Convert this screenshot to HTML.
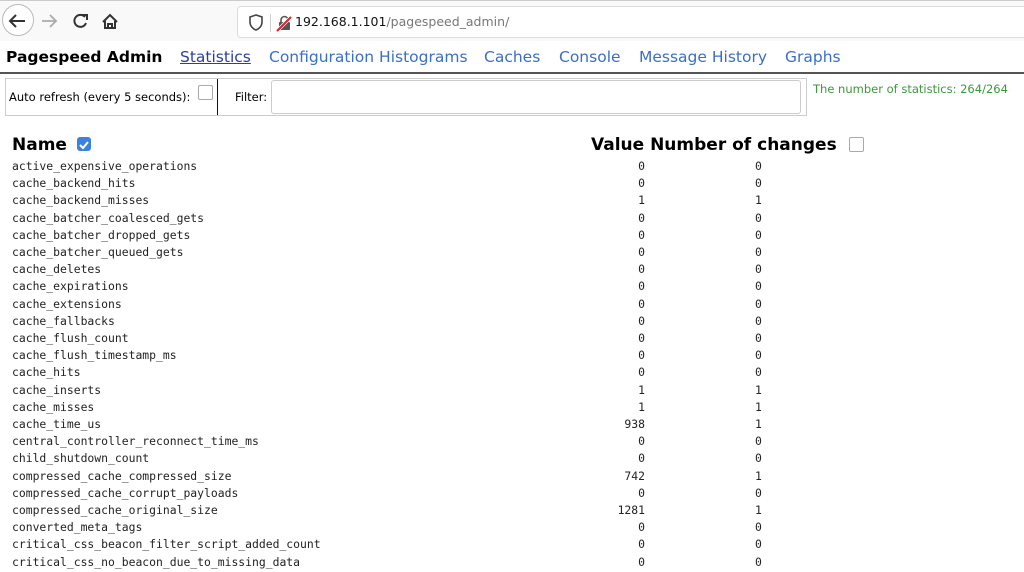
<!DOCTYPE html>
<html><head><meta charset="utf-8"><style>
body{margin:0;width:1024px;height:564px;overflow:hidden;background:#fff;font-family:"DejaVu Sans","Liberation Sans",sans-serif;position:relative}
.chrome{position:absolute;left:0;top:0;width:1024px;height:40px;background:#f9f9fa;border-top:1px solid #ccc}
.url{position:absolute;left:237px;top:5px;width:800px;height:30px;background:#fff;border:1px solid #ddd;border-radius:4px;font-size:12.5px;line-height:30px}
.nav{position:absolute;left:0;top:44px;width:1024px;height:28px;border-bottom:2px solid #555;font-size:15.5px}
.nav span{position:absolute;top:4px}
.nav a{color:#3a6fc7;text-decoration:none}
.bar{position:absolute;left:5px;top:78px;width:800px;height:36px;border:1px solid #ccc;font-size:11.5px}
.t{position:absolute;font-family:"DejaVu Sans Mono","Liberation Mono",monospace;font-size:11.4px;color:#222}
.row{position:absolute;left:12px;height:17px;width:760px}
.row .n{position:absolute;left:0}
.row .v{position:absolute;right:127px;text-align:right}
.row .c{position:absolute;left:743px}
</style></head><body>
<div class="chrome">
 <div style="position:absolute;left:2px;top:3px;width:30px;height:30px;border:1px solid #bbb;border-radius:50%;background:#fff"></div>
 <svg style="position:absolute;left:0;top:0" width="240" height="40">
  <path d="M25 20H10M16 14l-6 6 6 6" stroke="#333" stroke-width="2" fill="none"/>
  <path d="M42 20h14M50 14l6 6-6 6" stroke="#aaa" stroke-width="1.8" fill="none"/>
  <path d="M85 16a6 6 0 1 0 1 6" stroke="#333" stroke-width="2" fill="none"/><path d="M82 14h5v5" stroke="#333" stroke-width="2" fill="none"/>
  <path d="M103 21l7-7 7 7M105 20v7h10v-7M108 27v-4h4v4" stroke="#333" stroke-width="2" fill="none"/>
 </svg>
 <div class="url">
  <svg style="position:absolute;left:8px;top:6px" width="50" height="20"><path d="M4 4l6-2 6 2v5c0 4-3 7-6 8-3-1-6-4-6-8z" stroke="#444" stroke-width="1.6" fill="none"/><rect x="24" y="1" width="1" height="18" fill="#ccc"/><path d="M35 9V7a3.5 3.5 0 0 1 7 0v2" stroke="#555" stroke-width="1.6" fill="none"/><rect x="33" y="9" width="11" height="8" rx="1" fill="#555"/><path d="M31 18L45 4" stroke="#fff" stroke-width="3.5"/><path d="M31 18L45 4" stroke="#d22" stroke-width="2"/></svg>
  <span style="position:absolute;left:57px;color:#111">192.168.1.101<span style="color:#777">/pagespeed_admin/</span></span>
 </div>
</div>
<div class="nav">
 <span style="left:6px;font-weight:bold">Pagespeed Admin</span>
 <span style="left:180px"><a style="text-decoration:underline;color:#2a3fa0">Statistics</a></span>
 <span style="left:269px"><a>Configuration Histograms</a></span>
 <span style="left:484px"><a>Caches</a></span>
 <span style="left:559px"><a>Console</a></span>
 <span style="left:639px"><a>Message History</a></span>
 <span style="left:785px"><a>Graphs</a></span>
</div>
<div class="bar">
 <span style="position:absolute;left:3px;top:11px">Auto refresh (every 5 seconds):</span>
 <div style="position:absolute;left:192px;top:6px;width:13px;height:13px;border:1px solid #aaa;border-radius:2px"></div>
 <div style="position:absolute;left:211px;top:0;width:1px;height:36px;background:#111"></div>
 <span style="position:absolute;left:229px;top:11px">Filter:</span>
 <div style="position:absolute;left:265px;top:1px;width:528px;height:32px;border:1px solid #ccc;border-radius:3px"></div>
</div>
<div style="position:absolute;left:813px;top:82px;font-size:11.5px;color:#3a9a3a">The number of statistics: 264/264</div>
<div style="position:absolute;left:12px;top:135px;font-size:17px;font-weight:bold">Name</div>
<div style="position:absolute;left:77px;top:137px;width:14px;height:14px;background:#3b82e0;border-radius:3px"><svg width="14" height="14"><path d="M3 7l3 3 5-6" stroke="#fff" stroke-width="2" fill="none"/></svg></div>
<div style="position:absolute;left:591px;top:135px;font-size:17px;font-weight:bold">Value Number of changes</div>
<div style="position:absolute;left:849px;top:137px;width:13px;height:13px;border:1px solid #aaa;border-radius:2px"></div>
<div class="t" style="left:0;top:159px;width:1024px">
<div class="row" style="top:0"><span class="n">active_expensive_operations</span><span class="v">0</span><span class="c">0</span></div>
<div class="row" style="top:17.2px"><span class="n">cache_backend_hits</span><span class="v">0</span><span class="c">0</span></div>
<div class="row" style="top:34.4px"><span class="n">cache_backend_misses</span><span class="v">1</span><span class="c">1</span></div>
<div class="row" style="top:51.6px"><span class="n">cache_batcher_coalesced_gets</span><span class="v">0</span><span class="c">0</span></div>
<div class="row" style="top:68.8px"><span class="n">cache_batcher_dropped_gets</span><span class="v">0</span><span class="c">0</span></div>
<div class="row" style="top:86px"><span class="n">cache_batcher_queued_gets</span><span class="v">0</span><span class="c">0</span></div>
<div class="row" style="top:103.2px"><span class="n">cache_deletes</span><span class="v">0</span><span class="c">0</span></div>
<div class="row" style="top:120.4px"><span class="n">cache_expirations</span><span class="v">0</span><span class="c">0</span></div>
<div class="row" style="top:137.6px"><span class="n">cache_extensions</span><span class="v">0</span><span class="c">0</span></div>
<div class="row" style="top:154.8px"><span class="n">cache_fallbacks</span><span class="v">0</span><span class="c">0</span></div>
<div class="row" style="top:172px"><span class="n">cache_flush_count</span><span class="v">0</span><span class="c">0</span></div>
<div class="row" style="top:189.2px"><span class="n">cache_flush_timestamp_ms</span><span class="v">0</span><span class="c">0</span></div>
<div class="row" style="top:206.4px"><span class="n">cache_hits</span><span class="v">0</span><span class="c">0</span></div>
<div class="row" style="top:223.6px"><span class="n">cache_inserts</span><span class="v">1</span><span class="c">1</span></div>
<div class="row" style="top:240.8px"><span class="n">cache_misses</span><span class="v">1</span><span class="c">1</span></div>
<div class="row" style="top:258px"><span class="n">cache_time_us</span><span class="v">938</span><span class="c">1</span></div>
<div class="row" style="top:275.2px"><span class="n">central_controller_reconnect_time_ms</span><span class="v">0</span><span class="c">0</span></div>
<div class="row" style="top:292.4px"><span class="n">child_shutdown_count</span><span class="v">0</span><span class="c">0</span></div>
<div class="row" style="top:309.6px"><span class="n">compressed_cache_compressed_size</span><span class="v">742</span><span class="c">1</span></div>
<div class="row" style="top:326.8px"><span class="n">compressed_cache_corrupt_payloads</span><span class="v">0</span><span class="c">0</span></div>
<div class="row" style="top:344px"><span class="n">compressed_cache_original_size</span><span class="v">1281</span><span class="c">1</span></div>
<div class="row" style="top:361.2px"><span class="n">converted_meta_tags</span><span class="v">0</span><span class="c">0</span></div>
<div class="row" style="top:378.4px"><span class="n">critical_css_beacon_filter_script_added_count</span><span class="v">0</span><span class="c">0</span></div>
<div class="row" style="top:395.6px"><span class="n">critical_css_no_beacon_due_to_missing_data</span><span class="v">0</span><span class="c">0</span></div>
</div>
</body></html>
